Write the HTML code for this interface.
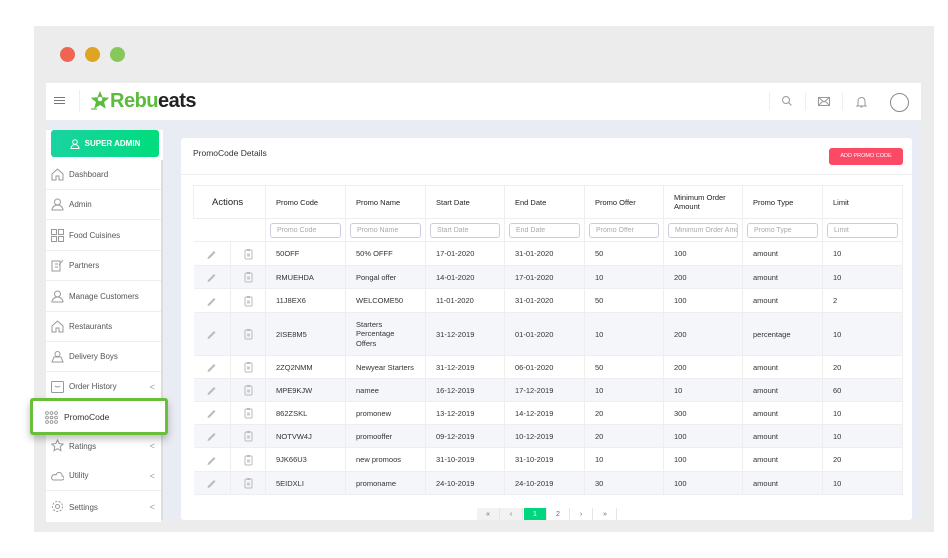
<!DOCTYPE html>
<html><head><meta charset="utf-8"><style>
*{box-sizing:border-box;margin:0;padding:0}
body{width:948px;height:558px;background:#fff;font-family:"Liberation Sans",sans-serif;position:relative;overflow:hidden;color:#333}
.abs{position:absolute}
.frame{left:34px;top:26px;width:900px;height:506px;background:#ececec}
.dot{width:15px;height:15px;border-radius:50%;top:47px}
.hdr{left:46px;top:83px;width:875px;height:37px;background:#fff}
.content{left:46px;top:120px;width:875px;height:400px;background:#e9ecf3}
.side{left:46px;top:130px;width:117px;height:390px;background:#fff}
.sb{left:161px;top:160px;width:2px;height:360px;background:#ddd}
.item{left:46px;width:115px;height:30px;border-bottom:1px solid #eee;font-size:8px;color:#555;display:flex;align-items:center;padding-left:23px;background:#fff}
.ic{position:absolute;left:5px;top:8px;width:13px;height:13px}
.chev{position:absolute;right:6px;font-size:9px;color:#999}
.card{left:181px;top:138px;width:731px;height:382px;background:#fff;border-radius:3px}
table{position:absolute;left:193px;top:185px;border-collapse:collapse;font-size:7.5px;color:#333;table-layout:fixed}
td,th{border-right:1px solid #eee;padding:0 0 0 10px;text-align:left;vertical-align:middle;font-weight:normal}
th{font-size:7.5px;color:#222;height:33px;line-height:9px}
.f td{height:23px;padding:0 4px}
.f input{width:100%;height:15px;border:1px solid #ccd;border-radius:3px;font-size:7px;padding-left:6px;color:#aaa;font-family:inherit;background:#fff}
tbody tr:nth-child(even){background:#f4f6fa}
tr{border-bottom:1px solid #eee}
td.a{padding:0;text-align:center;line-height:0}
.pg{top:508px;height:12px;width:23px;background:#f2f2f2;border-right:1px solid #e6e6e6;font-size:7px;color:#666;text-align:center;line-height:14px}
</style></head><body>
<svg width="0" height="0" style="position:absolute"><defs>
<g id="pen"><path d="M2 9l6-6 1.5 1.5-6 6L1.5 11z" fill="#bbb"/></g>
<g id="clip"><rect x="2" y="2" width="7" height="9" rx="1" fill="none" stroke="#bbb"/><rect x="4" y="1" width="3" height="2" fill="#bbb"/><rect x="4" y="5.5" width="3" height="3" fill="#ccc"/></g>
</defs></svg>
<div class="abs frame"></div>
<div class="abs dot" style="left:60px;background:#ef6452"></div>
<div class="abs dot" style="left:85px;background:#dea423"></div>
<div class="abs dot" style="left:110px;background:#88c75a"></div>
<div class="abs hdr"></div>
<div class="abs" style="left:54px;top:97px;width:11px;height:1px;background:#777;box-shadow:0 3px 0 #777,0 6px 0 #777"></div>
<div class="abs" style="left:79px;top:90px;width:1px;height:22px;background:#eee"></div>
<svg class="abs" style="left:90px;top:90px" width="20" height="22" viewBox="0 0 20 22"><path d="M10 1l2.6 6.3 6.7.4-5.2 4.3 1.7 6.6L10 15l-5.8 3.6 1.7-6.6L.7 7.7l6.7-.4z" fill="#5cbb3c"/><circle cx="10" cy="9" r="2.3" fill="#fff"/><path d="M1 19h6" stroke="#5cbb3c" stroke-width="1.2"/></svg>
<div class="abs" style="left:110px;top:90px;font-size:20px;font-weight:bold;letter-spacing:-0.5px"><span style="color:#5cbb3c">Rebu</span><span style="color:#222">eats</span></div>
<div class="abs" style="left:769px;top:92px;width:1px;height:18px;background:#eee"></div>
<div class="abs" style="left:805px;top:92px;width:1px;height:18px;background:#eee"></div>
<div class="abs" style="left:842px;top:92px;width:1px;height:18px;background:#eee"></div>
<svg class="abs" style="left:781px;top:95px" width="12" height="12"><circle cx="5" cy="5" r="3.5" fill="none" stroke="#999"/><path d="M7.5 7.5l3 3" stroke="#999"/></svg>
<svg class="abs" style="left:818px;top:97px" width="12" height="9"><rect x=".5" y=".5" width="11" height="8" fill="none" stroke="#999"/><path d="M.5.5l5.5 4.5 5.5-4.5M.5 8.5l4-4M11.5 8.5l-4-4" fill="none" stroke="#999"/></svg>
<svg class="abs" style="left:856px;top:95px" width="11" height="13"><path d="M2 10V6a3.5 3.5 0 017 0v4l1 1H1z M4.5 12h2" fill="none" stroke="#999"/></svg>
<div class="abs" style="left:890px;top:93px;width:19px;height:19px;border:1px solid #888;border-radius:50%"></div>
<div class="abs content"></div>
<div class="abs side"></div>
<div class="abs sb"></div>
<div class="abs" style="left:51px;top:130px;width:108px;height:27px;border-radius:3px;background:linear-gradient(90deg,#1ad3a0,#00dc7d);color:#fff;font-size:8px;font-weight:bold;display:flex;align-items:center;justify-content:center"><svg width="10" height="10" style="margin-right:5px"><circle cx="5" cy="3" r="2.3" fill="none" stroke="#fff"/><path d="M1 9.5a4 4 0 018 0z" fill="none" stroke="#fff"/></svg>SUPER ADMIN</div>
<div class="abs item" style="top:160px"><svg class="ic" viewBox="0 0 13 13"><path d="M1 6L6.5 1 12 6v6H8V8H5v4H1z" fill="none" stroke="#999"/></svg>Dashboard</div>
<div class="abs item" style="top:190px"><svg class="ic" viewBox="0 0 13 13"><circle cx="6.5" cy="4" r="3" fill="none" stroke="#999"/><path d="M1 12a5.5 5 0 0111 0z" fill="none" stroke="#999"/></svg>Admin</div>
<div class="abs item" style="top:221px"><svg class="ic" viewBox="0 0 13 13"><rect x=".5" y=".5" width="5" height="5" fill="none" stroke="#999"/><rect x="7.5" y=".5" width="5" height="5" fill="none" stroke="#999"/><rect x=".5" y="7.5" width="5" height="5" fill="none" stroke="#999"/><rect x="7.5" y="7.5" width="5" height="5" fill="none" stroke="#999"/></svg>Food Cuisines</div>
<div class="abs item" style="top:251px"><svg class="ic" viewBox="0 0 13 13"><path d="M1 2h8v10H1z M4 5h3M4 8h3 M8 6l4-5" fill="none" stroke="#999"/></svg>Partners</div>
<div class="abs item" style="top:282px"><svg class="ic" viewBox="0 0 13 13"><circle cx="6.5" cy="4" r="3" fill="none" stroke="#999"/><path d="M1 12a5.5 5 0 0111 0z" fill="none" stroke="#999"/></svg>Manage Customers</div>
<div class="abs item" style="top:312px"><svg class="ic" viewBox="0 0 13 13"><path d="M1 6L6.5 1 12 6v6H8V8H5v4H1z" fill="none" stroke="#999"/></svg>Restaurants</div>
<div class="abs item" style="top:342px"><svg class="ic" viewBox="0 0 13 13"><circle cx="6.5" cy="4" r="2.5" fill="none" stroke="#999"/><path d="M1 12l2-5h7l2 5z" fill="none" stroke="#999"/></svg>Delivery Boys</div>
<div class="abs item" style="top:372px"><svg class="ic" viewBox="0 0 13 13"><rect x=".5" y="1.5" width="12" height="11" rx="1" fill="none" stroke="#999"/><path d="M4 6q2.5 2 5 0" fill="none" stroke="#999"/></svg>Order History<span class="chev">&lt;</span></div>
<div class="abs item" style="top:431px;border:0"><svg class="ic" viewBox="0 0 13 13"><path d="M6.5 1l1.7 3.6 3.9.5-2.9 2.7.8 3.9-3.5-2-3.5 2 .8-3.9L.9 5.1l3.9-.5z" fill="none" stroke="#999"/></svg>Ratings<span class="chev">&lt;</span></div>
<div class="abs item" style="top:461px"><svg class="ic" viewBox="0 0 13 13"><path d="M2 11h9a2 2 0 000-4 3 3 0 00-6-1 2.5 2.5 0 00-3 5z" fill="none" stroke="#999"/></svg>Utility<span class="chev">&lt;</span></div>
<div class="abs item" style="top:492px;border:0"><svg class="ic" viewBox="0 0 13 13"><circle cx="6.5" cy="6.5" r="2" fill="none" stroke="#999"/><circle cx="6.5" cy="6.5" r="5" fill="none" stroke="#999" stroke-dasharray="2 1.5"/></svg>Settings<span class="chev">&lt;</span></div>
<div class="abs" style="left:30px;top:398px;width:138px;height:37px;background:#fff;border:3px solid #69bf3c;border-radius:3px;box-shadow:0 4px 8px rgba(0,0,0,.25);font-size:8.5px;color:#333;display:flex;align-items:center;padding-left:31px"><svg style="position:absolute;left:12px;top:10px" width="13" height="13"><g fill="none" stroke="#888" stroke-width=".8"><circle cx="2" cy="2" r="1.4"/><circle cx="6.5" cy="2" r="1.4"/><circle cx="11" cy="2" r="1.4"/><circle cx="2" cy="6.5" r="1.4"/><circle cx="6.5" cy="6.5" r="1.4"/><circle cx="11" cy="6.5" r="1.4"/><circle cx="2" cy="11" r="1.4"/><circle cx="6.5" cy="11" r="1.4"/><circle cx="11" cy="11" r="1.4"/></g></svg>PromoCode</div>
<div class="abs card"></div>
<div class="abs" style="left:193px;top:148px;font-size:8.5px;color:#333">PromoCode Details</div>
<div class="abs" style="left:181px;top:174px;width:731px;height:1px;background:#f0f0f0"></div>
<div class="abs" style="left:829px;top:148px;width:74px;height:17px;background:#fb4966;border-radius:3px;color:#fff;font-size:5.5px;text-align:center;line-height:17px">ADD PROMO CODE</div>
<table>
<colgroup><col style="width:37px"><col style="width:35px"><col style="width:80px"><col style="width:80px"><col style="width:79px"><col style="width:80px"><col style="width:79px"><col style="width:79px"><col style="width:80px"><col style="width:80px"></colgroup>
<thead>
<tr style="border-top:1px solid #eee"><th colspan="2" style="font-size:9.5px;padding-left:18px;border-left:1px solid #eee">Actions</th><th>Promo Code</th><th>Promo Name</th><th>Start Date</th><th>End Date</th><th>Promo Offer</th><th>Minimum Order Amount</th><th>Promo Type</th><th>Limit</th></tr>
<tr class="f"><td colspan="2"></td><td><input value="Promo Code"></td><td><input value="Promo Name"></td><td><input value="Start Date"></td><td><input value="End Date"></td><td><input value="Promo Offer"></td><td><input value="Minimum Order Amount"></td><td><input value="Promo Type"></td><td><input value="Limit"></td></tr>
</thead>
<tbody>
<tr style="height:24px"><td class="a"><svg width="11" height="12"><use href="#pen"/></svg></td><td class="a"><svg width="11" height="12"><use href="#clip"/></svg></td><td>50OFF</td><td>50% OFFF</td><td>17-01-2020</td><td>31-01-2020</td><td>50</td><td>100</td><td>amount</td><td>10</td></tr>
<tr style="height:23px"><td class="a"><svg width="11" height="12"><use href="#pen"/></svg></td><td class="a"><svg width="11" height="12"><use href="#clip"/></svg></td><td>RMUEHDA</td><td>Pongal offer</td><td>14-01-2020</td><td>17-01-2020</td><td>10</td><td>200</td><td>amount</td><td>10</td></tr>
<tr style="height:24px"><td class="a"><svg width="11" height="12"><use href="#pen"/></svg></td><td class="a"><svg width="11" height="12"><use href="#clip"/></svg></td><td>11J8EX6</td><td>WELCOME50</td><td>11-01-2020</td><td>31-01-2020</td><td>50</td><td>100</td><td>amount</td><td>2</td></tr>
<tr style="height:43px"><td class="a"><svg width="11" height="12"><use href="#pen"/></svg></td><td class="a"><svg width="11" height="12"><use href="#clip"/></svg></td><td>2ISE8M5</td><td style="line-height:9.5px">Starters<br>Percentage<br>Offers</td><td>31-12-2019</td><td>01-01-2020</td><td>10</td><td>200</td><td>percentage</td><td>10</td></tr>
<tr style="height:23px"><td class="a"><svg width="11" height="12"><use href="#pen"/></svg></td><td class="a"><svg width="11" height="12"><use href="#clip"/></svg></td><td>2ZQ2NMM</td><td>Newyear Starters</td><td>31-12-2019</td><td>06-01-2020</td><td>50</td><td>200</td><td>amount</td><td>20</td></tr>
<tr style="height:23px"><td class="a"><svg width="11" height="12"><use href="#pen"/></svg></td><td class="a"><svg width="11" height="12"><use href="#clip"/></svg></td><td>MPE9KJW</td><td>namee</td><td>16-12-2019</td><td>17-12-2019</td><td>10</td><td>10</td><td>amount</td><td>60</td></tr>
<tr style="height:23px"><td class="a"><svg width="11" height="12"><use href="#pen"/></svg></td><td class="a"><svg width="11" height="12"><use href="#clip"/></svg></td><td>862ZSKL</td><td>promonew</td><td>13-12-2019</td><td>14-12-2019</td><td>20</td><td>300</td><td>amount</td><td>10</td></tr>
<tr style="height:23px"><td class="a"><svg width="11" height="12"><use href="#pen"/></svg></td><td class="a"><svg width="11" height="12"><use href="#clip"/></svg></td><td>NOTVW4J</td><td>promooffer</td><td>09-12-2019</td><td>10-12-2019</td><td>20</td><td>100</td><td>amount</td><td>10</td></tr>
<tr style="height:24px"><td class="a"><svg width="11" height="12"><use href="#pen"/></svg></td><td class="a"><svg width="11" height="12"><use href="#clip"/></svg></td><td>9JK66U3</td><td>new promoos</td><td>31-10-2019</td><td>31-10-2019</td><td>10</td><td>100</td><td>amount</td><td>20</td></tr>
<tr style="height:23px"><td class="a"><svg width="11" height="12"><use href="#pen"/></svg></td><td class="a"><svg width="11" height="12"><use href="#clip"/></svg></td><td>5EIDXLI</td><td>promoname</td><td>24-10-2019</td><td>24-10-2019</td><td>30</td><td>100</td><td>amount</td><td>10</td></tr>
</tbody></table>
<div class="abs pg" style="left:477px">«</div>
<div class="abs pg" style="left:500px">‹</div>
<div class="abs pg" style="left:524px;background:#00d67e;color:#fff">1</div>
<div class="abs pg" style="left:547px;background:#fff">2</div>
<div class="abs pg" style="left:570px;background:#fff">›</div>
<div class="abs pg" style="left:594px;background:#fff">»</div>
</body></html>
